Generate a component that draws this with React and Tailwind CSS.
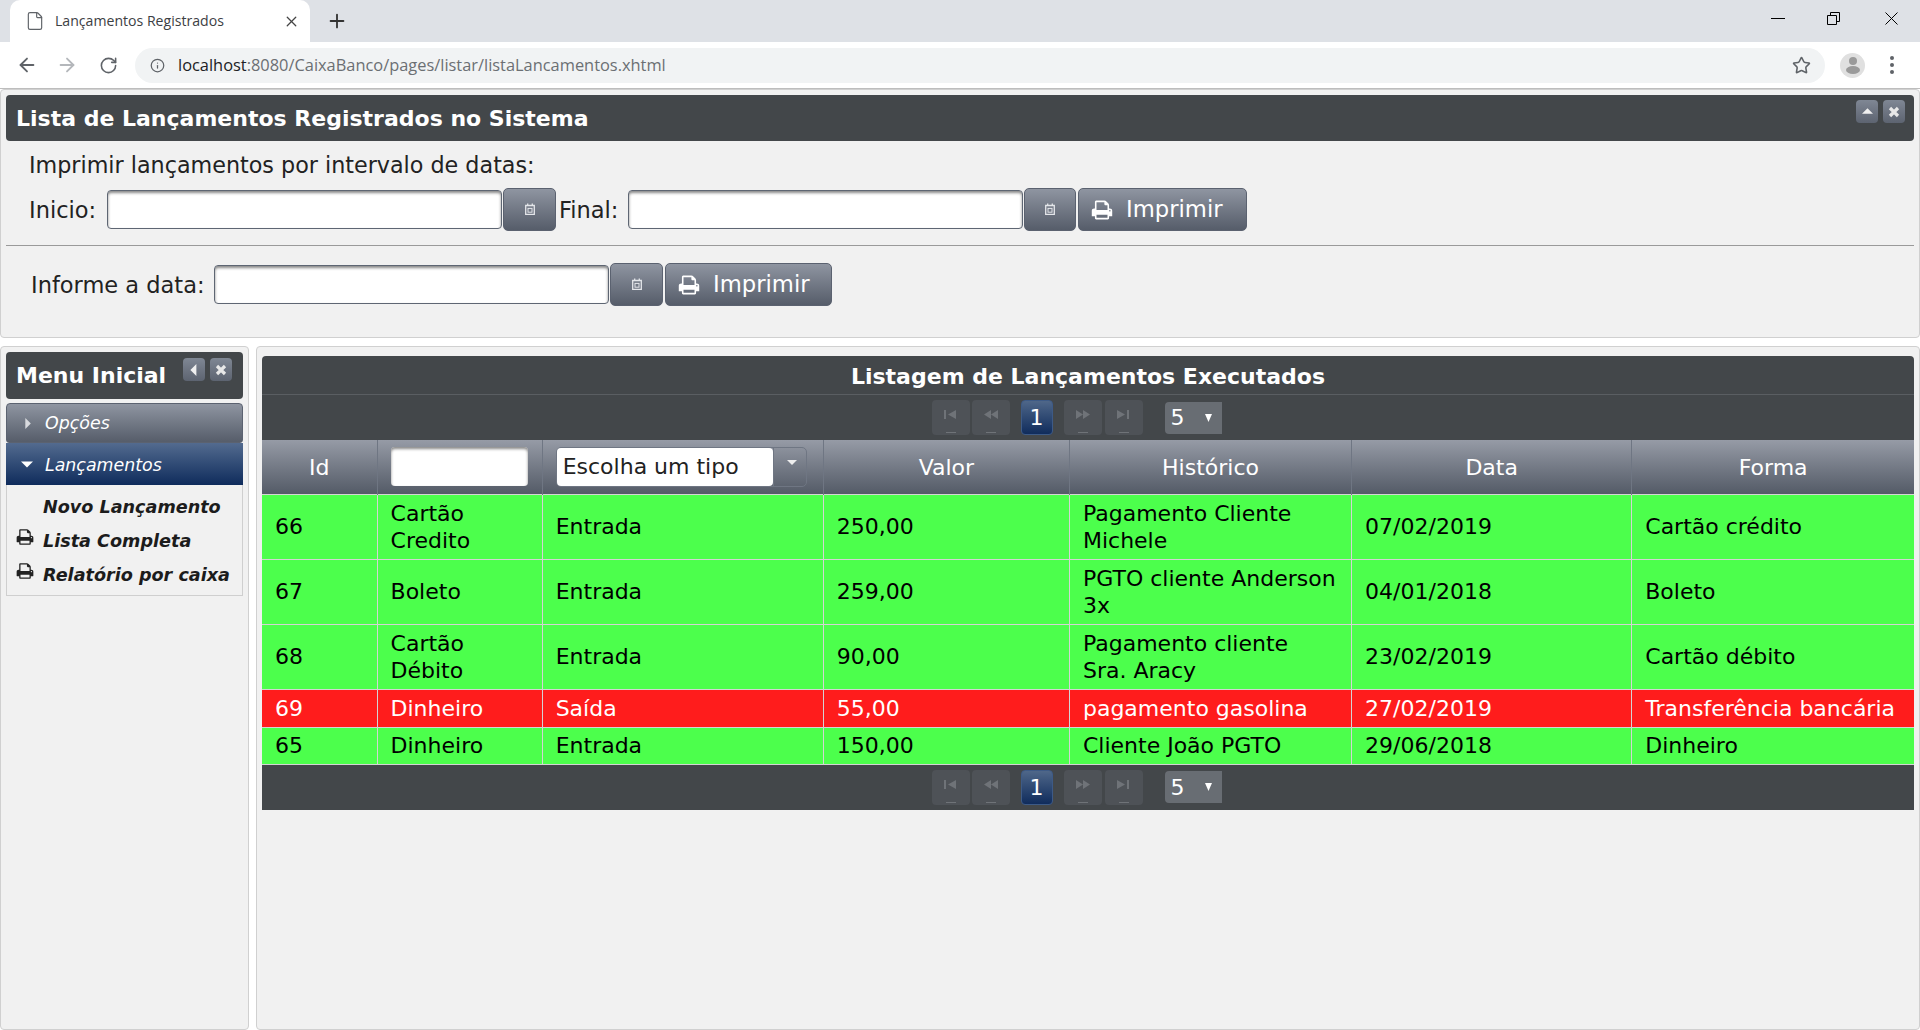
import React from "react";
import { ArrowLeft, ArrowRight, RotateCw, Info, Star, Plus, X, File } from "lucide-react";

const Tri = ({ dir = "up", size = 8, color = "#fff", className = "" }) => {
  const pts = { up: "0,7 5,2 10,7", down: "0,3 10,3 5,8", left: "7,0 7,10 2,5", right: "3,0 3,10 8,5" }[dir];
  return (
    <svg width={size} height={size} viewBox="0 0 10 10" className={className}>
      <polygon points={pts} fill={color} />
    </svg>
  );
};

const PrintIcon = ({ size = 21, color = "#fff", className = "" }) => (
  <svg width={size} height={size} viewBox="0 0 1792 1792" fill={color} className={className}>
    <path d="M448 1536h896v-256h-896v256zm0-640h896v-384h-160q-40 0-68-28t-28-68v-160h-640v640zm1152 64q0-26-19-45t-45-19-45 19-19 45 19 45 45 19 45-19 19-45zm128 0v416q0 13-9.5 22.5t-22.5 9.5h-224v160q0 40-28 68t-68 28h-960q-40 0-68-28t-28-68v-160h-224q-13 0-22.5-9.5t-9.5-22.5v-416q0-79 56.5-135.5t135.5-56.5h64v-544q0-40 28-68t68-28h672q40 0 88 20t76 48l152 152q28 28 48 76t20 88v256h64q79 0 135.5 56.5t56.5 135.5z" />
  </svg>
);

const TitleBtn = ({ children }) => (
  <span className="w-[22px] h-[23px] rounded-[4px] bg-linear-to-b from-[#7f8794] to-[#5d6471] flex items-center justify-center">
    {children}
  </span>
);

const CloseGlyph = () => (
  <svg width="12" height="12" viewBox="0 0 12 12">
    <path d="M2 2 L10 10 M10 2 L2 10" stroke="#e8e8e8" strokeWidth="3.2" />
  </svg>
);

const Cal = () => (
  <svg width="10" height="12" viewBox="0 0 10 12" className="-mt-[2px]">
    <path d="M.7 2.5h8.6v9H.7z M2.7 .5v2 M7.3 .5v2" fill="none" stroke="#e4e6ea" strokeWidth="1.3" />
    <rect x="3" y="5.4" width="4" height="3.8" fill="none" stroke="#e4e6ea" strokeWidth="1" />
  </svg>
);

const TextInput = () => (
  <span className="block w-[395px] h-[39px] rounded-[4px] bg-white border border-[#5e6673] shadow-[inset_0_2px_3px_#888]" />
);

const CalBtn = ({ w = "w-[53px]" }) => (
  <span className={`ml-[1px] ${w} h-[43px] rounded-[5px] bg-linear-to-b from-[#8f95a1] to-[#565d6a] border border-[#5b6270] flex items-center justify-center`}>
    <Cal />
  </span>
);

const PrintBtn = ({ w }) => (
  <span
    className={`ml-[2px] h-[43px] rounded-[5px] bg-linear-to-b from-[#8f95a1] to-[#565d6a] border border-[#5b6270] flex items-center pl-[12px] gap-[13px] text-white text-[22.7px] ${w}`}
  >
    <PrintIcon size={22} />
    Imprimir
  </span>
);

const PagBtn = ({ w = "w-[38px]", kind }) => {
  const icons = {
    first: <path d="M0 0h2v9H0z M12 0v9L4 4.5z" />,
    prev: <path d="M7 0v9L0 4.5z M14 0v9L7 4.5z" />,
    next: <path d="M0 0v9l7-4.5z M7 0v9l7-4.5z" />,
    last: <path d="M0 0v9l8-4.5z M10 0h2v9h-2z" />,
  };
  return (
    <span className={`${w} h-[35px] rounded-[4px] bg-[#4e5257] flex flex-col items-center pt-[10px] justify-between pb-[2px]`}>
      <svg width="14" height="9" viewBox="0 0 14 9" fill="#6f7378">{icons[kind]}</svg>
      <span className="w-[10px] h-[1px] bg-[#6f7378]" />
    </span>
  );
};

const Paginator = ({ className = "" }) => (
  <div className={`flex items-center justify-center pr-[23px] ${className}`}>
    <PagBtn kind="first" />
    <span className="w-[2px]" />
    <PagBtn kind="prev" />
    <span className="w-[11px]" />
    <span className="w-[32px] h-[35px] rounded-[4px] bg-linear-to-b from-[#4f6789] to-[#102c5c] border border-[#3d5a86] text-white text-[22px] flex items-center justify-center">
      1
    </span>
    <span className="w-[11px]" />
    <PagBtn kind="next" />
    <span className="w-[3px]" />
    <PagBtn kind="last" />
    <span className="w-[22px]" />
    <span className="w-[57px] h-[32px] rounded-l-[4px] bg-[#686d73] text-white text-[22px] flex items-center justify-between pl-[6px] pr-[10px]">
      5
      <svg width="7" height="8" viewBox="0 0 7 8" fill="#fff"><polygon points="0,0 7,0 3.5,8" /></svg>
    </span>
  </div>
);

const rows = [
  ["66", "Cartão Credito", "Entrada", "250,00", "Pagamento Cliente Michele", "07/02/2019", "Cartão crédito", "g", "h-[65px]"],
  ["67", "Boleto", "Entrada", "259,00", "PGTO cliente Anderson 3x", "04/01/2018", "Boleto", "g", "h-[65px]"],
  ["68", "Cartão Débito", "Entrada", "90,00", "Pagamento cliente Sra. Aracy", "23/02/2019", "Cartão débito", "g", "h-[65px]"],
  ["69", "Dinheiro", "Saída", "55,00", "pagamento gasolina", "27/02/2019", "Transferência bancária", "r", "h-[38px]"],
  ["65", "Dinheiro", "Entrada", "150,00", "Cliente João PGTO", "29/06/2018", "Dinheiro", "g", "h-[37px]"],
];

const Th = ({ children, w }) => (
  <th className={`${w} border-x border-[#6f7683] first:border-l-0 last:border-r-0 font-normal text-white text-[22px] text-center p-0`}>
    {children}
  </th>
);

export default function App() {
  return (
    <div className="w-[1920px] h-[1030px] flex flex-col bg-white overflow-hidden font-['DejaVu_Sans',sans-serif] text-[#222]">
      {/* Browser tab strip */}
      <div className="h-[42px] shrink-0 bg-[#dee1e6] flex items-end relative font-['Open_Sans',sans-serif]">
        <div className="ml-[10px] w-[300px] h-[42px] bg-white rounded-t-[10px] flex items-center pl-[15px] pr-[10px] text-[#3c4043]">
          <File size={20} strokeWidth={1.4} color="#5f6368" />
          <span className="ml-[10px] text-[14.1px] flex-1 whitespace-nowrap">Lançamentos Registrados</span>
          <X size={17} strokeWidth={1.8} color="#444" />
        </div>
        <span className="ml-[16px] mb-[10px]">
          <Plus size={22} strokeWidth={2} color="#333" />
        </span>
        <div className="ml-auto mr-[22px] self-start mt-[12px] flex items-center">
          <span className="w-[14px] h-[1px] bg-black" />
          <svg width="13" height="13" viewBox="0 0 13 13" fill="none" stroke="#000" strokeWidth="1" className="ml-[42px]">
            <path d="M.5 3.5h9v9h-9z M3.5 3.5v-3h9v9h-3" />
          </svg>
          <svg width="13" height="13" viewBox="0 0 13 13" fill="none" stroke="#000" strokeWidth="1" className="ml-[45px]">
            <path d="M.5 .5L12.5 12.5M12.5 .5L.5 12.5" />
          </svg>
        </div>
      </div>

      {/* Browser toolbar */}
      <div className="h-[47px] shrink-0 bg-white border-b border-[#bdbdbd] flex items-center pl-[16px] font-['Open_Sans',sans-serif]">
        <ArrowLeft size={22} strokeWidth={2} color="#5f6368" />
        <ArrowRight size={22} strokeWidth={2} color="#b4b7bb" className="ml-[18px]" />
        <RotateCw size={19} strokeWidth={2} color="#5f6368" className="ml-[21px]" />
        <div className="ml-[17px] h-[35px] w-[1690px] rounded-full bg-[#f1f3f4] flex items-center pl-[15px] pr-[14px] text-[16.4px]">
          <Info size={15} strokeWidth={2} color="#5f6368" />
          <span className="ml-[13px] whitespace-nowrap text-[#202124]">
            localhost<span className="text-[#6b6f73]">:8080/CaixaBanco/pages/listar/listaLancamentos.xhtml</span>
          </span>
          <Star size={19} strokeWidth={2} color="#5f6368" className="ml-auto" />
        </div>
        <span className="ml-[15px] w-[25px] h-[25px] rounded-full bg-[#e0e0e0] flex items-center justify-center">
          <svg width="20" height="20" viewBox="0 0 20 20" fill="#9a9a9a">
            <circle cx="10" cy="6" r="4" />
            <ellipse cx="10" cy="15" rx="7" ry="4" />
          </svg>
        </span>
        <svg width="4" height="18" viewBox="0 0 4 18" fill="#5f6368" className="ml-[25px]">
          <circle cx="2" cy="2" r="2" />
          <circle cx="2" cy="9" r="2" />
          <circle cx="2" cy="16" r="2" />
        </svg>
      </div>

      {/* Top panel */}
      <section className="h-[249px] shrink-0 bg-[#f1f1f1] border border-[#d0d0d0] rounded-[4px] px-[5px] pt-[5px]">
        <header className="h-[46px] rounded-[4px] bg-[#43474a] flex pl-[10px] pr-[9px] text-white">
          <h1 className="font-bold text-[22px] leading-[48px] whitespace-nowrap">Lista de Lançamentos Registrados no Sistema</h1>
          <div className="ml-auto mt-[5px] flex gap-[5px]">
            <TitleBtn><Tri dir="up" size={11} color="#f0f0f0" /></TitleBtn>
            <TitleBtn><CloseGlyph /></TitleBtn>
          </div>
        </header>
        <p className="pl-[23px] mt-[11px] text-[22.25px] leading-[26px] whitespace-nowrap">Imprimir lançamentos por intervalo de datas:</p>
        <div className="flex items-center mt-[10px] h-[43px] pl-[23px] text-[22.5px]">
          <span className="w-[78px] whitespace-nowrap pt-[2px]">Inicio:</span>
          <TextInput />
          <CalBtn />
          <span className="ml-[3px] w-[69px] whitespace-nowrap pt-[2px]">Final:</span>
          <TextInput />
          <CalBtn w="w-[52px]" />
          <PrintBtn w="w-[169px]" />
        </div>
        <hr className="mt-[14px] border-0 border-t border-[#9a9a9a]" />
        <div className="flex items-center mt-[17px] h-[43px] pl-[25px] text-[22.5px]">
          <span className="w-[183px] whitespace-nowrap pt-[2px]">Informe a data:</span>
          <TextInput />
          <CalBtn />
          <PrintBtn w="w-[167px]" />
        </div>
      </section>

      {/* Lower area */}
      <div className="flex-1 flex mt-[8px] gap-[7px] min-h-0">
        <aside className="w-[249px] shrink-0 bg-[#f1f1f1] border border-[#d0d0d0] rounded-[4px] p-[5px]">
          <header className="h-[47px] rounded-[4px] bg-[#43474a] flex pl-[10px] pr-[11px] text-white">
            <h2 className="font-bold text-[22px] leading-[48px] whitespace-nowrap">Menu Inicial</h2>
            <div className="ml-auto mt-[6px] flex gap-[5px]">
              <TitleBtn><Tri dir="left" size={12} color="#f0f0f0" /></TitleBtn>
              <TitleBtn><CloseGlyph /></TitleBtn>
            </div>
          </header>
          <div className="mt-[4px] h-[40px] rounded-t-[4px] rounded-b-[3px] bg-linear-to-b from-[#8f95a1] to-[#565d6a] border border-[#5b6270] flex items-center italic text-white text-[17.4px]">
            <span className="ml-[15px] w-[23px]"><Tri dir="right" size={11} color="#d8dade" /></span>
            Opções
          </div>
          <div className="h-[42px] bg-linear-to-b from-[#536b8f] to-[#0f2c5c] flex items-center italic text-white text-[17.4px]">
            <span className="ml-[15px] w-[24px]"><Tri dir="down" size={12} color="#fff" /></span>
            <span className="pt-[3px]">Lançamentos</span>
          </div>
          <div className="h-[111px] border border-t-0 border-[#cfcfcf] pt-[5px] font-bold italic text-[17.6px] text-[#1c1c1c]">
            {[
              ["Novo Lançamento", false],
              ["Lista Completa", true],
              ["Relatório por caixa", true],
            ].map(([t, icon]) => (
              <div key={t} className="h-[34px] flex items-center relative pl-[36px] whitespace-nowrap">
                {icon && <PrintIcon size={18} color="#222" className="absolute left-[9px] top-[4px]" />}
                {t}
              </div>
            ))}
          </div>
        </aside>

        <main className="flex-1 bg-[#f1f1f1] border border-[#d0d0d0] rounded-[4px] pt-[9px] pl-[5px] pr-[5px]">
          <div className="rounded-t-[4px] overflow-hidden bg-[#43474a]">
            <div className="h-[39px] border-b border-[#5a5e62] text-white font-bold text-[22px] flex items-center justify-center pt-[2px]">
              Listagem de Lançamentos Executados
            </div>
            <Paginator className="h-[45px]" />
            <table className="w-full table-fixed border-collapse">
              <thead>
                <tr className="h-[54px] bg-linear-to-b from-[#969ba6] to-[#545b67]">
                  <Th w="w-[115px]"><span className="block pt-[2px]">Id</span></Th>
                  <Th w="w-[165px]">
                    <span className="block ml-[13px] w-[137px] h-[39px] rounded-[4px] bg-white shadow-[inset_0_2px_3px_#888]" />
                  </Th>
                  <Th w="w-[281px]">
                    <span className="ml-[13px] w-[251px] h-[40px] rounded-[5px] border border-[#6f7683] flex">
                      <span className="w-[216px] h-[38px] rounded-[4px] bg-white text-[#222] text-[22px] text-left pl-[6px] leading-[38px] whitespace-nowrap">Escolha um tipo</span>
                      <span className="flex-1 flex justify-center pt-[9px] pl-[4px] border-l border-[#6f7683]"><Tri dir="down" size={10} color="#eee" /></span>
                    </span>
                  </Th>
                  <Th w="w-[246px]"><span className="block pt-[2px]">Valor</span></Th>
                  <Th w="w-[282px]"><span className="block pt-[2px]">Histórico</span></Th>
                  <Th w="w-[280px]"><span className="block pt-[2px]">Data</span></Th>
                  <Th w="w-[282px]"><span className="block pt-[2px]">Forma</span></Th>
                </tr>
              </thead>
              <tbody>
                {rows.map((r) => {
                  const red = r[7] === "r";
                  return (
                    <tr key={r[0]} className={`${r[8]} ${red ? "bg-[#ff1c1c] text-white" : "bg-[#4cff4c] text-black"}`}>
                      {r.slice(0, 7).map((c, i) => (
                        <td key={i} className="border border-[#d4d4d4] first:border-l-0 last:border-r-0 px-[13px] py-0 text-[22px] leading-[27px] align-middle">
                          {c}
                        </td>
                      ))}
                    </tr>
                  );
                })}
              </tbody>
            </table>
            <Paginator className="h-[45px]" />
          </div>
        </main>
      </div>
    </div>
  );
}
